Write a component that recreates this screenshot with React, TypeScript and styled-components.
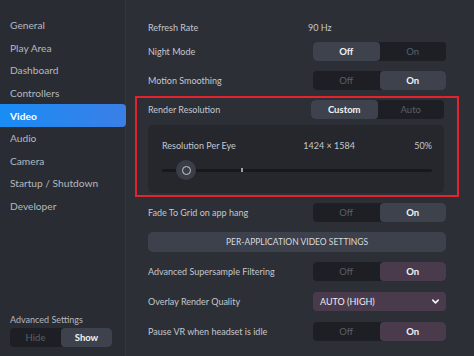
import React from "react";
import styled, { createGlobalStyle } from "styled-components";

const Global = createGlobalStyle`
  html, body { margin: 0; padding: 0; }
  body {
    width: 474px; height: 356px; overflow: hidden;
    background: #2c2f36;
    font-family: "Lato", "Noto Sans", sans-serif;
    color: #c9ccd2;
  }
`;

const Layout = styled.div`
  display: flex;
  width: 474px;
  height: 356px;
`;

const Sidebar = styled.nav`
  width: 126px;
  flex: none;
  background: #2a2c33;
  border-right: 1px solid #33363d;
  display: flex;
  flex-direction: column;
  padding-top: 14px;
  box-sizing: border-box;
`;

const NavItem = styled.div<{ $active?: boolean }>`
  height: 22.6px;
  display: flex;
  align-items: center;
  padding-left: 10px;
  margin-right: ${(p) => (p.$active ? "-1px" : "0")};
  font-size: 10.2px;
  color: ${(p) => (p.$active ? "#ffffff" : "#b4b8bf")};
  font-weight: ${(p) => (p.$active ? 700 : 400)};
  border-radius: 0 4px 4px 0;
  background: ${(p) => (p.$active ? "linear-gradient(90deg, #1a8cf5, #3a7fe6)" : "transparent")};
`;

const SideFooter = styled.div`
  margin-top: auto;
  padding: 0 0 9px 10px;
  display: flex;
  flex-direction: column;
  gap: 3px;
`;

const SmallLabel = styled.div`
  font-size: 9px;
  color: #b4b8bf;
`;

const Segment = styled.div<{ $w: number }>`
  display: flex;
  width: ${(p) => p.$w}px;
  height: 19px;
  border-radius: 4px;
  background: #1d1f24;
  overflow: hidden;
  flex: none;
`;

const SegOpt = styled.div<{ $on?: boolean; $tone?: "gray" | "purple" }>`
  flex: 1;
  display: flex;
  align-items: center;
  justify-content: center;
  font-size: 9.5px;
  border-radius: 4px;
  color: ${(p) => (p.$on ? "#f2f2f4" : "#5c5f66")};
  font-weight: ${(p) => (p.$on ? 700 : 400)};
  background: ${(p) =>
    p.$on ? (p.$tone === "purple" ? "#4a3b4c" : "#3d424d") : "transparent"};
`;

const Main = styled.main`
  flex: 1;
  padding: 17px 28px 0 22px;
  display: flex;
  flex-direction: column;
`;

const Row = styled.div<{ $h?: number }>`
  display: flex;
  align-items: center;
  justify-content: space-between;
  height: ${(p) => p.$h ?? 29}px;
  flex: none;
`;

const Label = styled.div`
  font-size: 9px;
  color: #c4c7cd;
`;

const Value = styled.div`
  width: 138px;
  font-size: 9px;
  color: #c4c7cd;
`;

const Highlight = styled.section`
  margin: 1px -13px 1px -13px;
  border: 2px solid #e3242e;
  padding: 2px 13px 2px 11px;
  display: flex;
  flex-direction: column;
`;

const SubCard = styled.div`
  margin-top: 6px;
  height: 68px;
  box-sizing: border-box;
  background: #25272d;
  border-radius: 5px;
  padding: 13px 12px 0 14px;
  display: flex;
  flex-direction: column;
  gap: 8px;
`;

const SubHead = styled.div`
  display: flex;
  align-items: center;
  height: 14px;
  font-size: 9px;
  color: #c4c7cd;
`;

const SubName = styled.div`
  flex: 1;
`;

const SubRes = styled.div`
  width: 111px;
`;

const SliderWrap = styled.div`
  position: relative;
  height: 20px;
  display: flex;
  align-items: center;
`;

const Track = styled.div`
  flex: 1;
  height: 3px;
  background: #16181c;
  border-radius: 2px;
`;

const Tick = styled.div`
  position: absolute;
  left: 79px;
  top: 8px;
  width: 2px;
  height: 4px;
  background: #9aa0a8;
`;

const Thumb = styled.div`
  position: absolute;
  left: 14px;
  top: 0;
  width: 20px;
  height: 20px;
  border-radius: 50%;
  background: #3b3e46;
  display: flex;
  align-items: center;
  justify-content: center;
  &::after {
    content: "";
    width: 9px;
    height: 9px;
    border-radius: 50%;
    border: 1.5px solid #c6c9cf;
    box-sizing: border-box;
  }
`;

const WideButton = styled.div`
  margin: 5px 0 5px;
  height: 20px;
  flex: none;
  border-radius: 5px;
  background: #3c414c;
  display: flex;
  align-items: center;
  justify-content: center;
  font-size: 8.5px;
  color: #d8dadf;
`;

const Select = styled.div`
  width: 133px;
  height: 19px;
  border-radius: 4px;
  background: #4a3b4c;
  display: flex;
  align-items: center;
  justify-content: space-between;
  padding: 0 6px 0 7px;
  box-sizing: border-box;
  font-size: 9px;
  color: #eeeef0;
`;

type Tone = "gray" | "purple";

const Toggle = ({ on, tone = "gray", a = "Off", b = "On" }: { on: boolean; tone?: Tone; a?: string; b?: string }) => (
  <Segment $w={133}>
    <SegOpt $on={!on} $tone={tone}>{a}</SegOpt>
    <SegOpt $on={on} $tone={tone}>{b}</SegOpt>
  </Segment>
);

const navs = ["General", "Play Area", "Dashboard", "Controllers", "Video", "Audio", "Camera", "Startup / Shutdown", "Developer"];

export default function App() {
  return (
    <>
      <Global />
      <Layout>
        <Sidebar>
          {navs.map((n) => (
            <NavItem key={n} $active={n === "Video"}>{n}</NavItem>
          ))}
          <SideFooter>
            <SmallLabel>Advanced Settings</SmallLabel>
            <Segment $w={102}>
              <SegOpt>Hide</SegOpt>
              <SegOpt $on>Show</SegOpt>
            </Segment>
          </SideFooter>
        </Sidebar>
        <Main>
          <Row $h={20}>
            <Label>Refresh Rate</Label>
            <Value>90 Hz</Value>
          </Row>
          <Row>
            <Label>Night Mode</Label>
            <Toggle on={false} />
          </Row>
          <Row>
            <Label>Motion Smoothing</Label>
            <Toggle on />
          </Row>
          <Highlight>
            <Row $h={19}>
              <Label>Render Resolution</Label>
              <Toggle on={false} a="Custom" b="Auto" />
            </Row>
            <SubCard>
              <SubHead>
                <SubName>Resolution Per Eye</SubName>
                <SubRes>1424 × 1584</SubRes>
                <div>50%</div>
              </SubHead>
              <SliderWrap>
                <Track />
                <Tick />
                <Thumb />
              </SliderWrap>
            </SubCard>
          </Highlight>
          <Row>
            <Label>Fade To Grid on app hang</Label>
            <Toggle on />
          </Row>
          <WideButton>PER-APPLICATION VIDEO SETTINGS</WideButton>
          <Row>
            <Label>Advanced Supersample Filtering</Label>
            <Toggle on tone="purple" />
          </Row>
          <Row $h={30}>
            <Label>Overlay Render Quality</Label>
            <Select>
              <span>AUTO (HIGH)</span>
              <svg width="9" height="9" viewBox="0 0 10 10">
                <path d="M2 3.5 L5 6.5 L8 3.5" fill="none" stroke="#f2f2f4" strokeWidth="1.8" strokeLinecap="round" strokeLinejoin="round" />
              </svg>
            </Select>
          </Row>
          <Row $h={30}>
            <Label>Pause VR when headset is idle</Label>
            <Toggle on tone="purple" />
          </Row>
        </Main>
      </Layout>
    </>
  );
}
